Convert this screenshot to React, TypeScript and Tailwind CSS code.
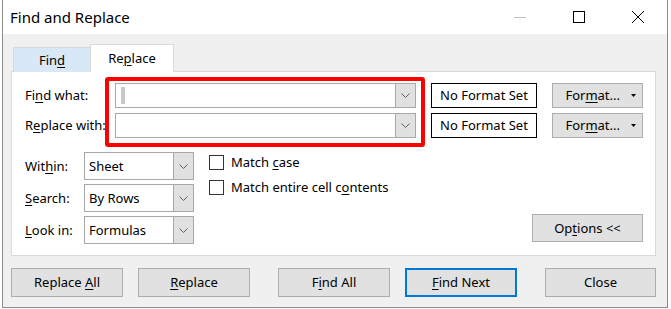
import React from 'react';

const U: React.FC<{ children: React.ReactNode }> = ({ children }) => (
  <span className="underline underline-offset-2 decoration-1">{children}</span>
);

const Chevron: React.FC = () => (
  <svg width="9" height="5" viewBox="0 0 9 5" fill="none">
    <path d="M0.5 0.5 L4.5 4.5 L8.5 0.5" stroke="#606060" strokeWidth="1" />
  </svg>
);

const Combo: React.FC<{ value?: string; width: string; height: string; caret?: boolean }> = ({
  value,
  width,
  height,
  caret,
}) => (
  <div className={`flex ${width} ${height} bg-white border border-[#a8a8a8]`}>
    <div className="flex-1 flex items-center pl-[4px] text-black">
      {caret && <div className="w-[4px] h-[17px] bg-[#c8c8c8] ml-[1px]" />}
      {value}
    </div>
    <div className="w-[20px] flex items-center justify-center bg-[#e1e1e1] border-l border-[#a8a8a8]">
      <Chevron />
    </div>
  </div>
);

const Btn: React.FC<{ children: React.ReactNode; primary?: boolean; className?: string }> = ({
  children,
  primary,
  className = '',
}) => (
  <div
    className={`flex items-center justify-center bg-[#e1e1e1] text-black whitespace-nowrap ${
      primary ? 'border-2 border-[#0078d7]' : 'border border-[#adadad]'
    } ${className}`}
  >
    {children}
  </div>
);

const Check: React.FC<{ children: React.ReactNode }> = ({ children }) => (
  <div className="flex items-center h-[16px] gap-[7px] whitespace-nowrap">
    <div className="w-[15px] h-[15px] bg-white border border-[#333]" />
    <span>{children}</span>
  </div>
);

export default function App() {
  return (
    <div className="w-[671px] h-[309px] bg-white overflow-hidden font-['Noto_Sans',sans-serif] text-[13px] leading-none text-black">
      <div className="ml-[2px] w-[666px] h-[308px] flex flex-col border-x border-b border-[#8a8a8a]">
        {/* title bar */}
        <div className="h-[34px] bg-white flex items-center shrink-0">
          <span className="pl-[7px] text-[15px]">Find and Replace</span>
          <div className="ml-auto flex items-center">
            <svg width="14" height="14" viewBox="0 0 14 14" className="mr-[45px]">
              <path d="M1 7.5 H13" stroke="#c4c4c4" strokeWidth="1" />
            </svg>
            <svg width="14" height="14" viewBox="0 0 14 14" className="mr-[45px]">
              <rect x="1.5" y="1.5" width="11" height="11" fill="none" stroke="#000" strokeWidth="1" />
            </svg>
            <svg width="14" height="14" viewBox="0 0 14 14" className="mr-[22px]">
              <path d="M1 1 L13 13 M13 1 L1 13" stroke="#000" strokeWidth="1" />
            </svg>
          </div>
        </div>

        {/* body */}
        <div className="flex-1 bg-[#f0f0f0] flex flex-col">
          {/* tabs */}
          <div className="flex items-end mt-[10px] ml-[10px] h-[28px] -mb-px relative z-10">
            <div className="w-[77px] h-[25px] bg-[#d9e8f6] border-t border-l border-[#d9d9d9] flex items-center justify-center">
              <span>
                Fin<U>d</U>
              </span>
            </div>
            <div className="w-[84px] h-[28px] bg-white border-x border-t border-[#d9d9d9] flex items-center justify-center">
              <span>
                Re<U>p</U>lace
              </span>
            </div>
          </div>

          {/* panel */}
          <div className="ml-[8px] w-[645px] h-[185px] bg-white border border-[#d9d9d9] flex flex-col">
            <div className="flex items-start pt-[5px]">
              <div className="pl-[13px] w-[93px] pt-[6px] flex flex-col gap-[5px] whitespace-nowrap">
                <div className="h-[25px] flex items-center">
                  <span>
                    Fi<U>n</U>d what:
                  </span>
                </div>
                <div className="h-[25px] flex items-center">
                  <span>
                    R<U>e</U>place with:
                  </span>
                </div>
              </div>
              <div className="w-[320px] h-[70px] border-4 border-[#ff0000] rounded-[3px] pl-[6px] pr-[5px] pt-[2px] flex flex-col gap-[5px]">
                <Combo width="w-[301px]" height="h-[25px]" caret />
                <Combo width="w-[301px]" height="h-[25px]" />
              </div>
              <div className="ml-[6px] pt-[6px] flex flex-col gap-[5px]">
                <div className="w-[106px] h-[25px] border border-black flex items-center justify-center whitespace-nowrap">
                  No Format Set
                </div>
                <div className="w-[106px] h-[25px] border border-black flex items-center justify-center whitespace-nowrap">
                  No Format Set
                </div>
              </div>
              <div className="ml-[15px] pt-[6px] flex flex-col gap-[5px]">
                {[0, 1].map((i) => (
                  <Btn key={i} className="w-[91px] h-[25px] !justify-end pr-[6px]">
                    <span>
                      For<U>m</U>at...
                    </span>
                    <svg width="5" height="3" viewBox="0 0 5 3" className="ml-[11px]">
                      <path d="M0 0 H5 L2.5 3 Z" fill="#000" />
                    </svg>
                  </Btn>
                ))}
              </div>
            </div>

            <div className="flex items-start mt-[5px]">
              <div className="pl-[13px] w-[72px] flex flex-col gap-[4px] whitespace-nowrap">
                <div className="h-[28px] flex items-center">
                  <span>
                    Wit<U>h</U>in:
                  </span>
                </div>
                <div className="h-[28px] flex items-center">
                  <span>
                    <U>S</U>earch:
                  </span>
                </div>
                <div className="h-[28px] flex items-center">
                  <span>
                    <U>L</U>ook in:
                  </span>
                </div>
              </div>
              <div className="flex flex-col gap-[4px]">
                <Combo value="Sheet" width="w-[110px]" height="h-[28px]" />
                <Combo value="By Rows" width="w-[110px]" height="h-[28px]" />
                <Combo value="Formulas" width="w-[110px]" height="h-[28px]" />
              </div>
              <div className="ml-[15px] pt-[2px] flex flex-col gap-[9px]">
                <Check>
                  Match <U>c</U>ase
                </Check>
                <Check>
                  Match entire cell c<U>o</U>ntents
                </Check>
              </div>
              <Btn className="ml-auto mr-[12px] mt-[62px] w-[111px] h-[28px]">
                <span>
                  Op<U>t</U>ions &lt;&lt;
                </span>
              </Btn>
            </div>
          </div>

          {/* bottom buttons */}
          <div className="flex mt-[12px] ml-[8px]">
            <Btn className="w-[112px] h-[29px]">
              <span>
                Replace <U>A</U>ll
              </span>
            </Btn>
            <Btn className="ml-[15px] w-[112px] h-[29px]">
              <span>
                <U>R</U>eplace
              </span>
            </Btn>
            <Btn className="ml-[28px] w-[112px] h-[29px]">
              <span>
                F<U>i</U>nd All
              </span>
            </Btn>
            <Btn primary className="ml-[15px] w-[112px] h-[29px]">
              <span>
                <U>F</U>ind Next
              </span>
            </Btn>
            <Btn className="ml-[28px] w-[111px] h-[29px]">Close</Btn>
          </div>
        </div>
      </div>
    </div>
  );
}
